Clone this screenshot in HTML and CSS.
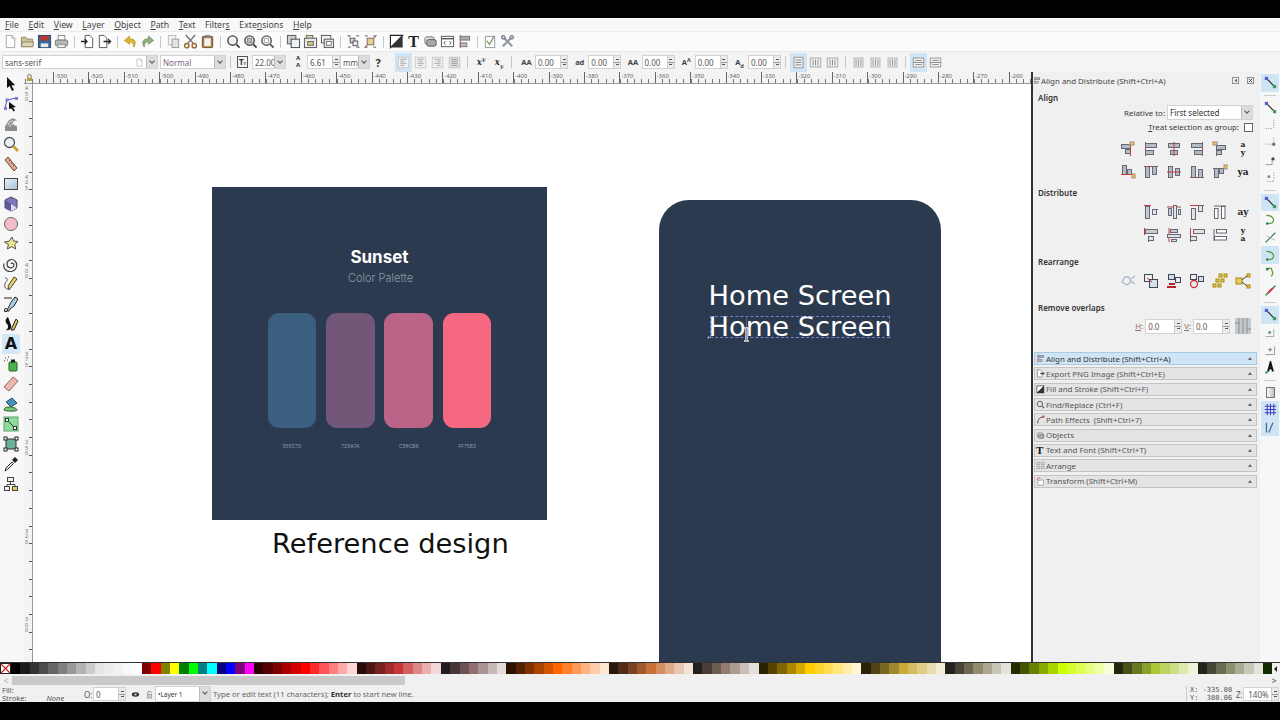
FILE: index.html
```html
<!DOCTYPE html>
<html lang="en">
<head>
  <meta charset="UTF-8">
  <title>Inkscape</title>
  <link rel="stylesheet" href="styles.css">
</head>
<body>
  <!-- shared icons -->
  <svg class="defs" width="0" height="0">
    <defs>
      <linearGradient id="pagefill" x1="0" x2="1"><stop offset="0" stop-color="#fff"/><stop offset="1" stop-color="#bbb"/></linearGradient>
      <symbol id="new" viewBox="0 0 16 16"><path d="M3.5 1.5h6l3 3v10h-9z" fill="#fff" stroke="#a5a5a5"/><path d="M9.5 1.5v3h3" fill="#e6e6e6" stroke="#a5a5a5"/></symbol>
      <symbol id="open" viewBox="0 0 16 16"><path d="M1.5 13.5v-10h5l1 2h6v8z" fill="#c9c29c" stroke="#8b8663"/><path d="M1.5 13.5l1-5h12l-1 5z" fill="#dcd6b4" stroke="#8b8663"/></symbol>
      <symbol id="save" viewBox="0 0 16 16"><rect x="1.5" y="1.5" width="13" height="13" fill="#34689f" stroke="#28466a"/><rect x="3" y="2" width="10" height="5" fill="#b23a3a"/><rect x="4" y="10" width="8" height="4" fill="#e8e8e8"/></symbol>
      <symbol id="print" viewBox="0 0 16 16"><rect x="4.5" y="1.5" width="7" height="5" fill="#fff" stroke="#888"/><rect x="1.5" y="6.5" width="13" height="6" rx="1" fill="#b9b9b9" stroke="#777"/><rect x="4" y="11" width="8" height="3.5" fill="#eee" stroke="#888"/></symbol>
      <symbol id="import" viewBox="0 0 16 16"><path d="M5.5 1.5h5l3 3v10h-8z" fill="#fff" stroke="#555"/><path d="M1 8h6M5 5.5L7.5 8 5 10.5" fill="none" stroke="#222" stroke-width="1.4"/></symbol>
      <symbol id="export" viewBox="0 0 16 16"><path d="M2.5 1.5h5l3 3v10h-8z" fill="#fff" stroke="#555"/><path d="M7 8h7M12 5.5L14.5 8 12 10.5" fill="none" stroke="#222" stroke-width="1.4"/></symbol>
      <symbol id="undo" viewBox="0 0 16 16"><path d="M7 2L1.5 7 7 11V8.5c3 0 4 1 4.5 5.5C14 10 14 5 7 5z" fill="#e0b52c" stroke="#a88518" stroke-width=".7"/></symbol>
      <symbol id="redo" viewBox="0 0 16 16"><path d="M9 2l5.5 5L9 11V8.5c-3 0-4 1-4.5 5.5C2 10 2 5 9 5z" fill="#8fb07a" stroke="#6b8a58" stroke-width=".7"/></symbol>
      <symbol id="dup" viewBox="0 0 16 16"><rect x="2.5" y="1.5" width="8" height="10" fill="#f4f4f4" stroke="#bbb"/><rect x="6.5" y="5.5" width="7" height="9" fill="#e4e4e4" stroke="#999"/></symbol>
      <symbol id="cut" viewBox="0 0 16 16"><path d="M3 1l8 9M13 1L5 10" stroke="#777" stroke-width="1.6" fill="none"/><circle cx="4" cy="12.5" r="2.3" fill="none" stroke="#9a6a2c" stroke-width="1.5"/><circle cx="12" cy="12.5" r="2.3" fill="none" stroke="#9a6a2c" stroke-width="1.5"/></symbol>
      <symbol id="paste" viewBox="0 0 16 16"><rect x="2.5" y="2.5" width="11" height="12" rx="1" fill="#a87b3e" stroke="#6f4f22"/><rect x="4.5" y="4.5" width="7" height="8.5" fill="#f3f3f3"/><rect x="5.5" y="1" width="5" height="3" fill="#888"/></symbol>
      <symbol id="zoom1" viewBox="0 0 16 16"><circle cx="7" cy="7" r="5" fill="#eef2f4" stroke="#444" stroke-width="1.5"/><path d="M11 11l3.5 3.5" stroke="#444" stroke-width="2"/></symbol>
      <symbol id="zoom2" viewBox="0 0 16 16"><circle cx="7" cy="7" r="5" fill="#eef2f4" stroke="#444" stroke-width="1.5"/><rect x="4.5" y="4.5" width="5" height="5" fill="#bbb" stroke="#666" stroke-width=".7"/><path d="M11 11l3.5 3.5" stroke="#444" stroke-width="2"/></symbol>
      <symbol id="zoom3" viewBox="0 0 16 16"><circle cx="7" cy="7" r="5" fill="#e3e9ec" stroke="#555" stroke-width="1.5"/><rect x="5" y="5" width="4" height="4" fill="#fff" stroke="#888" stroke-width=".7"/><path d="M11 11l3.5 3.5" stroke="#555" stroke-width="2"/></symbol>
      <symbol id="stack1" viewBox="0 0 16 16"><rect x="1.5" y="1.5" width="9" height="9" fill="#c7d0d6" stroke="#555"/><rect x="5.5" y="5.5" width="9" height="9" fill="#eef1f3" stroke="#444"/></symbol>
      <symbol id="stack2" viewBox="0 0 16 16"><rect x="3.5" y="1.5" width="7" height="5" fill="#ddd7a8" stroke="#666"/><rect x="1.5" y="4.5" width="13" height="10" fill="#e9e9e9" stroke="#555"/><rect x="5" y="8" width="6" height="4" fill="#d7c77c" stroke="#666"/></symbol>
      <symbol id="stack3" viewBox="0 0 16 16"><rect x="1.5" y="1.5" width="10" height="8" fill="#f3f3f3" stroke="#555"/><rect x="4.5" y="5.5" width="10" height="9" fill="#e5e5e5" stroke="#555"/><rect x="7" y="8" width="5" height="4" fill="#fff" stroke="#777"/></symbol>
      <symbol id="group" viewBox="0 0 16 16"><path d="M2 2h3M11 2h3M2 14h3M11 14h3" stroke="#555"/><rect x="4.5" y="4.5" width="5" height="5" fill="#cfd6da" stroke="#555"/><rect x="7.5" y="7.5" width="5" height="5" fill="#eee" stroke="#555"/><path d="M1.5 1.5l3 3M14.5 14.5l-3-3" stroke="#8a8aa8"/></symbol>
      <symbol id="ungroup" viewBox="0 0 16 16"><path d="M2 2h3M11 2h3M2 14h3M11 14h3" stroke="#555"/><rect x="4.5" y="4.5" width="7" height="7" fill="#e6d48a" stroke="#766"/><path d="M1.5 14.5l3-3M14.5 1.5l-3 3" stroke="#a33"/></symbol>
      <symbol id="fillstroke" viewBox="0 0 16 16"><path d="M1.5 14.5v-13h13z" fill="#fff" stroke="#222" stroke-width="1.2"/><path d="M14.5 1.5v13h-13z" fill="#333"/></symbol>
      <symbol id="objects" viewBox="0 0 16 16"><rect x="2" y="3" width="10" height="8" rx="2" fill="#ddd" stroke="#777"/><rect x="4" y="6" width="10" height="7" rx="2" fill="#aaa" stroke="#555"/></symbol>
      <symbol id="xml" viewBox="0 0 16 16"><rect x="1.5" y="2.5" width="13" height="11" fill="#fff" stroke="#555"/><path d="M2 5h12" stroke="#555" stroke-width="1.5"/><path d="M6 7.5L4 9.5l2 2M10 7.5l2 2-2 2" fill="none" stroke="#555"/></symbol>
      <symbol id="alignpanel" viewBox="0 0 16 16"><path d="M3.5 1v14" stroke="#c55" stroke-width="1.2"/><rect x="3.5" y="2.5" width="10" height="4" fill="#aaa" stroke="#777"/><rect x="3.5" y="9.5" width="7" height="4" fill="#bbb" stroke="#777"/></symbol>
      <symbol id="prefs" viewBox="0 0 16 16"><rect x="2.5" y="2.5" width="10" height="12" fill="#fff" stroke="#999"/><path d="M4 7l3 4 5-9" fill="none" stroke="#7a9a6a" stroke-width="1.4"/></symbol>
      <symbol id="tools" viewBox="0 0 16 16"><path d="M3 3l10 10M13 3L3 13" stroke="#8e9aa0" stroke-width="2.4"/><circle cx="3.5" cy="3.5" r="2" fill="#b8c2c8" stroke="#667"/><circle cx="12.5" cy="3.5" r="2" fill="#b8c2c8" stroke="#667"/></symbol>

      <symbol id="txt-l" viewBox="0 0 16 16"><rect x="1.5" y="1.5" width="13" height="13" fill="#f2f2f2" stroke="#c2c2c2"/><path d="M4 4h8M4 6.5h5M4 9h8M4 11.5h5" stroke="#999"/></symbol>
      <symbol id="txt-c" viewBox="0 0 16 16"><rect x="1.5" y="1.5" width="13" height="13" fill="#f2f2f2" stroke="#c2c2c2"/><path d="M4 4h8M5.5 6.5h5M4 9h8M5.5 11.5h5" stroke="#999"/></symbol>
      <symbol id="txt-r" viewBox="0 0 16 16"><rect x="1.5" y="1.5" width="13" height="13" fill="#f2f2f2" stroke="#c2c2c2"/><path d="M4 4h8M7 6.5h5M4 9h8M7 11.5h5" stroke="#999"/></symbol>
      <symbol id="txt-j" viewBox="0 0 16 16"><rect x="1.5" y="1.5" width="13" height="13" fill="#e4e4e4" stroke="#bbb"/><path d="M4 4h8M4 6.5h8M4 9h8M4 11.5h8" stroke="#888"/></symbol>
      <symbol id="dir-h" viewBox="0 0 16 16"><rect x="2.5" y="1.5" width="11" height="13" fill="#f3f3f3" stroke="#888"/><path d="M4.5 5h7M4.5 8h7M4.5 11h7" stroke="#666"/></symbol>
      <symbol id="dir-v" viewBox="0 0 16 16"><rect x="1.5" y="2.5" width="13" height="11" fill="#f3f3f3" stroke="#999"/><path d="M5 4.5v7M8 4.5v7M11 4.5v7" stroke="#777"/></symbol>
      <symbol id="dir-b" viewBox="0 0 16 16"><rect x="2.5" y="2.5" width="11" height="11" fill="#ececec" stroke="#aaa"/><path d="M5 4v8M8 4v8M11 4v8" stroke="#888"/></symbol>
      <symbol id="lh" viewBox="0 0 16 16"><rect x="1.5" y="2.5" width="13" height="11" fill="#f3f3f3" stroke="#888"/><path d="M1.5 8h13M4 5.5h8M4 10.5h8" stroke="#777"/></symbol>

      <symbol id="a1" viewBox="0 0 16 16"><rect x="1.5" y="3.5" width="9" height="4" fill="#b3bcc3" stroke="#667"/><rect x="5.5" y="8.5" width="5" height="4" fill="#b3bcc3" stroke="#667"/><path d="M10.5 1v14" stroke="#c33a3a"/><rect x="10" y="1" width="4" height="3" fill="#f2c94c" stroke="#a87"/></symbol>
      <symbol id="a1v" viewBox="0 0 16 16"><rect x="2.5" y="1.5" width="4" height="9" fill="#b3bcc3" stroke="#667"/><rect x="7.5" y="5.5" width="4" height="5" fill="#b3bcc3" stroke="#667"/><path d="M1 10.5h14" stroke="#c33a3a"/><rect x="12" y="10" width="3" height="4" fill="#f2c94c" stroke="#a87"/></symbol>
      <symbol id="a2" viewBox="0 0 16 16"><path d="M2.5 1v14" stroke="#c33a3a"/><rect x="2.5" y="2.5" width="11" height="4" fill="#b3bcc3" stroke="#667"/><rect x="2.5" y="9.5" width="8" height="4" fill="#b3bcc3" stroke="#667"/></symbol>
      <symbol id="a3" viewBox="0 0 16 16"><rect x="2.5" y="2.5" width="11" height="4" fill="#b3bcc3" stroke="#667"/><rect x="4.5" y="9.5" width="7" height="4" fill="#b3bcc3" stroke="#667"/><path d="M8 1v14" stroke="#c33a3a"/></symbol>
      <symbol id="a4" viewBox="0 0 16 16"><path d="M13.5 1v14" stroke="#c33a3a"/><rect x="2.5" y="2.5" width="11" height="4" fill="#b3bcc3" stroke="#667"/><rect x="5.5" y="9.5" width="8" height="4" fill="#b3bcc3" stroke="#667"/></symbol>
      <symbol id="a5" viewBox="0 0 16 16"><path d="M4.5 1v14" stroke="#c33a3a"/><rect x="1" y="1" width="4" height="3" fill="#f2c94c" stroke="#a87"/><rect x="4.5" y="4.5" width="9" height="4" fill="#b3bcc3" stroke="#667"/><rect x="4.5" y="9.5" width="5" height="4" fill="#b3bcc3" stroke="#667"/></symbol>
      <symbol id="a5v" viewBox="0 0 16 16"><path d="M1 4.5h14" stroke="#c33a3a"/><rect x="2.5" y="4.5" width="4" height="9" fill="#b3bcc3" stroke="#667"/><rect x="7.5" y="4.5" width="4" height="5" fill="#b3bcc3" stroke="#667"/><rect x="12" y="1" width="3" height="4" fill="#f2c94c" stroke="#a87"/></symbol>
      <symbol id="d1" viewBox="0 0 16 16"><path d="M1 1.5h7M9 5.5h6" stroke="#c33a3a"/><rect x="2.5" y="2.5" width="4" height="12" fill="#c3ccd2" stroke="#667"/><rect x="9.5" y="5.5" width="4" height="5" fill="#dfe4e7" stroke="#667"/></symbol>
      <symbol id="d2" viewBox="0 0 16 16"><path d="M1 3h14" stroke="#c33a3a"/><rect x="2.5" y="4.5" width="3" height="7" fill="#c3ccd2" stroke="#667"/><rect x="7.5" y="1.5" width="3" height="13" fill="#dfe4e7" stroke="#667"/><rect x="12.5" y="5.5" width="2" height="5" fill="#dfe4e7" stroke="#667"/></symbol>
      <symbol id="d3" viewBox="0 0 16 16"><path d="M1 1.5h14" stroke="#c33a3a"/><rect x="2.5" y="4.5" width="4" height="11" fill="#dfe4e7" stroke="#667"/><rect x="9.5" y="1.5" width="4" height="6" fill="#dfe4e7" stroke="#667"/></symbol>
      <symbol id="d4" viewBox="0 0 16 16"><path d="M2 2h12" stroke="#667"/><rect x="2.5" y="4.5" width="3.5" height="10" fill="#fff" stroke="#667"/><rect x="9.5" y="2.5" width="3.5" height="12" fill="#fff" stroke="#667"/></symbol>

      <symbol id="s-node" viewBox="0 0 16 16"><path d="M3 3l10 10" stroke="#222" stroke-width="1.5"/><rect x="1" y="1" width="4" height="4" fill="#5560c0"/><rect x="11" y="11" width="4" height="4" fill="#3f9a55"/></symbol>
      <symbol id="s-bbox" viewBox="0 0 16 16"><path d="M2 13h8M12 2v11" stroke="#888" stroke-dasharray="1.5 1.5"/></symbol>
      <symbol id="s-edge" viewBox="0 0 16 16"><path d="M2 10h9M12 2v12" stroke="#888" stroke-dasharray="1.5 1.5"/><circle cx="12" cy="10" r="2" fill="#5a7a60"/></symbol>
      <symbol id="s-corner" viewBox="0 0 16 16"><path d="M2 13h8V8" stroke="#888" fill="none"/><circle cx="11" cy="6" r="2" fill="#444"/></symbol>
      <symbol id="s-mid" viewBox="0 0 16 16"><path d="M12 2v11H2" stroke="#888" stroke-dasharray="1.5 1.5" fill="none"/><circle cx="6" cy="7" r="1.8" fill="#888"/></symbol>
      <symbol id="s-curve" viewBox="0 0 16 16"><path d="M3 3c8 0 10 5 8 8-1 2-4 2-6 2" stroke="#5a9a3a" stroke-width="1.5" fill="none"/><circle cx="4" cy="13" r="1.6" fill="#2f7a55"/></symbol>
      <symbol id="s-cross" viewBox="0 0 16 16"><path d="M2 14L14 2" stroke="#2e7a3c" stroke-width="1.5"/><path d="M3 6l10 5" stroke="#aab" stroke-width="1.2"/></symbol>
      <symbol id="s-cusp" viewBox="0 0 16 16"><path d="M3 3h6l2 6-2 4" stroke="#5a9a3a" stroke-width="1.5" fill="none"/><circle cx="4" cy="4" r="1.6" fill="#2f7a55"/></symbol>
      <symbol id="s-red" viewBox="0 0 16 16"><path d="M2 14L14 2" stroke="#3f9a55" stroke-width="1.8"/><path d="M5 11l6-6" stroke="#d0384a" stroke-width="2.4"/></symbol>
      <symbol id="s-pt1" viewBox="0 0 16 16"><path d="M2 13h10V4" stroke="#999" fill="none"/><circle cx="7" cy="8" r="1.8" fill="#58a868"/></symbol>
      <symbol id="s-pt2" viewBox="0 0 16 16"><path d="M2 13h11V3" stroke="#888" fill="none"/><path d="M5 7h5M7.5 4.5v5" stroke="#666"/></symbol>
      <symbol id="s-text" viewBox="0 0 16 16"><path d="M5 13L8 2l3 11M6 9h4" stroke="#111" stroke-width="2.4" fill="none"/><circle cx="3" cy="14" r="1.5" fill="#2f8a44"/></symbol>
      <symbol id="s-page" viewBox="0 0 16 16"><rect x="3" y="2" width="10" height="12" fill="url(#pagefill)" stroke="#555"/></symbol>
      <symbol id="s-grid" viewBox="0 0 16 16"><path d="M1 4h14M1 8h14M1 12h14M4 1v14M8 1v14M12 1v14" stroke="#3a3ac0" stroke-width="1.2"/></symbol>
      <symbol id="s-guide" viewBox="0 0 16 16"><path d="M3 2v12M11 2L6 14" stroke="#4a6a9a" stroke-width="1.6"/></symbol>
    </defs>
  </svg>

  <div class="letterbox"></div>

  <nav class="menu">
    <span><u>F</u>ile</span>
    <span><u>E</u>dit</span>
    <span><u>V</u>iew</span>
    <span><u>L</u>ayer</span>
    <span><u>O</u>bject</span>
    <span><u>P</u>ath</span>
    <span><u>T</u>ext</span>
    <span>Filter<u>s</u></span>
    <span>Exte<u>n</u>sions</span>
    <span><u>H</u>elp</span>
  </nav>

  <div class="commands">
    <svg class="btn"><use href="#new"/></svg>
    <svg class="btn"><use href="#open"/></svg>
    <svg class="btn"><use href="#save"/></svg>
    <svg class="btn"><use href="#print"/></svg>
    <i class="sep"></i>
    <svg class="btn"><use href="#import"/></svg>
    <svg class="btn"><use href="#export"/></svg>
    <i class="sep"></i>
    <svg class="btn"><use href="#undo"/></svg>
    <svg class="btn"><use href="#redo"/></svg>
    <i class="sep"></i>
    <svg class="btn"><use href="#dup"/></svg>
    <svg class="btn"><use href="#cut"/></svg>
    <svg class="btn"><use href="#paste"/></svg>
    <i class="sep"></i>
    <svg class="btn"><use href="#zoom1"/></svg>
    <svg class="btn"><use href="#zoom2"/></svg>
    <svg class="btn"><use href="#zoom3"/></svg>
    <i class="sep"></i>
    <svg class="btn"><use href="#stack1"/></svg>
    <svg class="btn"><use href="#stack2"/></svg>
    <svg class="btn"><use href="#stack3"/></svg>
    <i class="sep"></i>
    <svg class="btn"><use href="#group"/></svg>
    <svg class="btn"><use href="#ungroup"/></svg>
    <i class="sep"></i>
    <svg class="btn"><use href="#fillstroke"/></svg>
    <span class="btn big-t">T</span>
    <svg class="btn"><use href="#objects"/></svg>
    <svg class="btn"><use href="#xml"/></svg>
    <svg class="btn"><use href="#alignpanel"/></svg>
    <i class="sep"></i>
    <svg class="btn"><use href="#prefs"/></svg>
    <svg class="btn"><use href="#tools"/></svg>
  </div>

  <div class="textbar">
    <div class="combo font-combo"><span class="combo-text">sans-serif</span><svg class="combo-ic"><use href="#new"/></svg><b class="arrow"></b></div>
    <div class="combo style-combo"><span class="combo-text">Normal</span><b class="arrow"></b></div>
    <i class="sep"></i>
    <span class="tb-ic tsize">T<small>T</small></span>
    <div class="combo size-combo"><span class="combo-text">22.00</span><b class="arrow"></b></div>
    <span class="tb-ic spread">A<br>A</span>
    <div class="spin lh-spin"><span>6.61</span><b class="spinner"></b></div>
    <div class="combo unit-combo"><span class="combo-text">mm</span><b class="arrow"></b></div>
    <span class="help">?</span>
    <span class="toggle on first"><svg class="ico"><use href="#txt-l"/></svg></span>
    <span class="toggle"><svg class="ico"><use href="#txt-c"/></svg></span>
    <span class="toggle"><svg class="ico"><use href="#txt-r"/></svg></span>
    <span class="toggle"><svg class="ico"><use href="#txt-j"/></svg></span>
    <i class="sep"></i>
    <span class="sup">x<sup>y</sup></span>
    <span class="sup">x<sub>y</sub></span>
    <i class="sep sep-c"></i>
    <span class="fx">AA</span>
    <div class="spin num"><span>0.00</span><b class="spinner"></b></div>
    <span class="fx">ad</span>
    <div class="spin num"><span>0.00</span><b class="spinner"></b></div>
    <span class="fx">AA</span>
    <div class="spin num"><span>0.00</span><b class="spinner"></b></div>
    <span class="fx">A<sup>A</sup></span>
    <div class="spin num"><span>0.00</span><b class="spinner"></b></div>
    <span class="fx">A<sub>d</sub></span>
    <div class="spin num"><span>0.00</span><b class="spinner"></b></div>
    <i class="sep"></i>
    <span class="toggle on"><svg class="ico"><use href="#dir-h"/></svg></span>
    <span class="toggle"><svg class="ico"><use href="#dir-v"/></svg></span>
    <span class="toggle"><svg class="ico"><use href="#dir-v"/></svg></span>
    <i class="sep"></i>
    <span class="toggle"><svg class="ico"><use href="#dir-b"/></svg></span>
    <span class="toggle"><svg class="ico"><use href="#dir-b"/></svg></span>
    <span class="toggle"><svg class="ico"><use href="#dir-b"/></svg></span>
    <i class="sep"></i>
    <span class="toggle on"><svg class="ico"><use href="#lh"/></svg></span>
    <span class="toggle"><svg class="ico"><use href="#lh"/></svg></span>
  </div>

  <div class="workspace">
    <aside class="toolbox">
      <svg class="tool" viewBox="0 0 16 16"><path d="M4 1l8 8-3.500.5L11 14l-2 1-2.300-5L4 12z" fill="#111"/></svg>
      <svg class="tool" viewBox="0 0 16 16"><path d="M2 12L4 4l9-2" fill="none" stroke="#5058c0"/><rect x="1" y="11" width="3" height="3" fill="#7a80d8"/><rect x="2.5" y="2.5" width="3" height="3" fill="#7a80d8"/><rect x="12" y="1" width="3" height="3" fill="#7a80d8"/><path d="M6 6l7 5-3 .5 2 3-1.5 1-2-3L6 13z" fill="#111"/></svg>
      <svg class="tool" viewBox="0 0 16 16"><path d="M2 15V10c2-1 2-5 6-7 3-1 5 0 6 2-2-1-4 0-4 2s2 3 4 3v5z" fill="#8d8d8d"/><path d="M5 9c1-3 3-4 5-4M7 11c0-2 1-3 3-3" stroke="#eee" fill="none"/></svg>
      <svg class="tool" viewBox="0 0 16 16"><circle cx="6.5" cy="6.5" r="5" fill="#eaf2f7" stroke="#555" stroke-width="1.3"/><path d="M10.5 10.5l4.5 4.5" stroke="#c9a030" stroke-width="2.6"/></svg>
      <svg class="tool" viewBox="0 0 16 16"><path d="M5 1l9 11-3 3L2 4z" fill="#dba98e" stroke="#6d4a3a"/><path d="M6 5l1.5-1M8 7.5l1.5-1M10 10l1.5-1" stroke="#6d4a3a"/></svg>
      <svg class="tool" viewBox="0 0 16 16"><defs><linearGradient id="rectg" x1="0" y1="0" x2="1" y2="1"><stop offset="0" stop-color="#e8f0f6"/><stop offset="1" stop-color="#a9c2d6"/></linearGradient></defs><rect x="1.5" y="2.5" width="13" height="11" fill="url(#rectg)" stroke="#444"/></svg>
      <svg class="tool" viewBox="0 0 16 16"><path d="M8 1l6 3v8l-6 3-6-3V4z" fill="#7a78b5" stroke="#47456f"/><path d="M8 8l6 4-6 3-6-3z" fill="#e0dff2"/><path d="M2 4l6 4v7l-6-3z" fill="#5c5a96"/></svg>
      <svg class="tool" viewBox="0 0 16 16"><circle cx="8" cy="8" r="6.5" fill="#f6bcc8" stroke="#666"/></svg>
      <svg class="tool" viewBox="0 0 16 16"><path d="M9 1l1.5 4 4.500.5-3.300 3 1 4.500-4-2.300-4.300 2.300 1-4.500L1.500 6l4.500-.7z" fill="#ece58c" stroke="#555"/></svg>
      <svg class="tool" viewBox="0 0 16 16"><path d="M8 8c1-2 4 0 2.500 2.500S4 12 4 8s5-6 8-3 2 10-4 10.500-8-4-7-8" fill="none" stroke="#444" stroke-width="1.2"/></svg>
      <svg class="tool" viewBox="0 0 16 16"><path d="M6 14L14 3l-3-2-6 9z" fill="#e8cf58" stroke="#443"/><path d="M2 2c3 0 3 2 1 4s-2 7 2 7" fill="none" stroke="#555"/></svg>
      <svg class="tool" viewBox="0 0 16 16"><path d="M1 2h8M1 15c5 0 5-7 8-10l3-4 3 2-4 7c-2 2-4 2-5 5z" fill="#a8cde0" stroke="#222"/><circle cx="3" cy="14" r="1.5" fill="#fff" stroke="#222"/></svg>
      <svg class="tool" viewBox="0 0 16 16"><path d="M8 14L13 3l2 2-4 9z" fill="#e3c95a" stroke="#222"/><path d="M5 1C2 3 2 6 4 8s1 5-1 6c4 1 6-2 5-5S6 4 5 1z" fill="#111"/></svg>
      <div class="tool-active"><span>A</span></div>
      <svg class="tool" viewBox="0 0 16 16"><rect x="6" y="6" width="8" height="9" rx="1" fill="#4cb04c" stroke="#1e6a1e"/><rect x="8" y="3.5" width="4" height="3" fill="#222"/><path d="M2 2h1M4 4h1M1 5h1M5 1h1" stroke="#333"/></svg>
      <svg class="tool" viewBox="0 0 16 16"><path d="M10 1l5 4-9 10-5-4z" fill="#f0b7ad" stroke="#8c6a62"/></svg>
      <svg class="tool" viewBox="0 0 16 16"><path d="M3 6l6-4 5 5-6 4z" fill="#4a92ba" stroke="#22506e"/><path d="M1 14c0-2 2-3 5-3s8 1 8 3-13 1-13 0z" fill="#7ec27e" stroke="#2e6a2e"/></svg>
      <svg class="tool" viewBox="0 0 16 16"><rect x="1" y="1" width="14" height="14" fill="#8fdc9a" stroke="#5aa86a"/><path d="M4 4l8 8" stroke="#333"/><rect x="2.5" y="2.5" width="3" height="3" fill="#fff" stroke="#333"/><rect x="10.5" y="10.5" width="3" height="3" fill="#fff" stroke="#333"/></svg>
      <svg class="tool" viewBox="0 0 16 16"><rect x="3" y="3" width="10" height="10" fill="#6ab39a" stroke="#333"/><rect x="1" y="1" width="3" height="3" fill="#fff" stroke="#222"/><rect x="12" y="1" width="3" height="3" fill="#fff" stroke="#222"/><rect x="1" y="12" width="3" height="3" fill="#fff" stroke="#222"/><rect x="12" y="12" width="3" height="3" fill="#fff" stroke="#222"/></svg>
      <svg class="tool" viewBox="0 0 16 16"><path d="M2 15l1-3 6-6 1.5 1.5-6 6z" fill="#ddd" stroke="#333"/><path d="M9 4l3-3 3 3-3 3z" fill="#222"/></svg>
      <svg class="tool" viewBox="0 0 16 16"><rect x="4.5" y="1.5" width="6" height="4" fill="#eee" stroke="#444"/><rect x="1.5" y="10.5" width="5" height="4" fill="#eee" stroke="#444"/><rect x="9.5" y="10.5" width="5" height="4" fill="#e6c95a" stroke="#444"/><path d="M7.5 5.5v3M4 10.5v-2h8v2" fill="none" stroke="#444"/></svg>
    </aside>

    <div class="drawing">
      <div class="ruler-top" id="rulerTop"><svg class="ruler-lock" viewBox="0 0 8 8"><path d="M2 4V2.5a2 2 0 014 0V4" fill="none" stroke="#665"/><rect x="1" y="4" width="6" height="4" fill="#b8a04a"/></svg></div>
      <div class="drawing-body">
        <div class="ruler-left" id="rulerLeft"></div>
        <div class="canvas">
          <div class="card">
            <div class="card-title">Sunset</div>
            <div class="card-sub">Color Palette</div>
            <div class="swatches">
              <div class="swatch-col"><div class="swatch sw-blue"></div><span>355C7D</span></div>
              <div class="swatch-col"><div class="swatch sw-purple"></div><span>725A7A</span></div>
              <div class="swatch-col"><div class="swatch sw-rose"></div><span>C56C86</span></div>
              <div class="swatch-col"><div class="swatch sw-coral"></div><span>FF7582</span></div>
            </div>
          </div>
          <div class="caption">Reference design</div>
          <div class="phone">
            <div class="phone-line">Home Screen</div>
            <div class="phone-line editing">
              Home Screen
              <i class="text-box"></i>
              <i class="text-handle"></i>
              <i class="text-caret"></i>
              <svg class="ibeam" viewBox="0 0 7 16"><path d="M1 1h5M3.5 1v14M1 15h5" stroke="#fff" stroke-width="2.4"/><path d="M1 1h5M3.5 1v14M1 15h5" stroke="#667" stroke-width=".8"/></svg>
            </div>
          </div>
        </div>
      </div>
    </div>

    <aside class="dock">
      <div class="dock-title">
        <svg class="title-ic"><use href="#alignpanel"/></svg>
        <span>Align and Distribute (Shift+Ctrl+A)</span>
        <svg class="win-btn win-first" viewBox="0 0 8 8"><rect x=".5" y=".5" width="7" height="7" fill="#eee" stroke="#888"/><path d="M5.5 2L3 4l2.5 2z" fill="#555"/></svg>
        <svg class="win-btn" viewBox="0 0 8 8"><rect x=".5" y=".5" width="7" height="7" fill="#eee" stroke="#888"/><path d="M2 2l4 4M6 2L2 6" stroke="#444"/></svg>
      </div>

      <div class="panel">
        <h4 class="sec-align">Align</h4>
        <div class="rel-row"><span>Relative to:</span><div class="combo rel-combo"><span class="combo-text">First selected</span><b class="arrow"></b></div></div>
        <div class="treat-row"><span><u>T</u>reat selection as group:</span><i class="check"></i></div>
        <div class="ic-grid six">
          <svg class="ali"><use href="#a1"/></svg>
          <svg class="ali"><use href="#a2"/></svg>
          <svg class="ali"><use href="#a3"/></svg>
          <svg class="ali"><use href="#a4"/></svg>
          <svg class="ali"><use href="#a5"/></svg>
          <span class="ali-letters stack">a<br>y</span>
          <svg class="ali"><use href="#a1v"/></svg>
          <svg class="ali rot"><use href="#a2"/></svg>
          <svg class="ali rot"><use href="#a3"/></svg>
          <svg class="ali rot"><use href="#a4"/></svg>
          <svg class="ali"><use href="#a5v"/></svg>
          <span class="ali-letters">ya</span>
        </div>

        <h4 class="sec-dist">Distribute</h4>
        <div class="ic-grid five">
          <svg class="ali"><use href="#d1"/></svg>
          <svg class="ali"><use href="#d2"/></svg>
          <svg class="ali"><use href="#d3"/></svg>
          <svg class="ali"><use href="#d4"/></svg>
          <span class="ali-letters">ay</span>
          <svg class="ali rot"><use href="#d1"/></svg>
          <svg class="ali rot"><use href="#d2"/></svg>
          <svg class="ali rot"><use href="#d3"/></svg>
          <svg class="ali rot"><use href="#d4"/></svg>
          <span class="ali-letters stack">y<br>a</span>
        </div>

        <h4 class="sec-rear">Rearrange</h4>
        <div class="ic-row">
          <svg class="ali" viewBox="0 0 16 16"><path d="M2 9l3-5h4l2 5-4 3zM11 6l4-3M11 8l4 3" fill="none" stroke="#aab8c8" stroke-width="1.3"/></svg>
          <svg class="ali" viewBox="0 0 16 16"><rect x="1.5" y="1.5" width="8" height="7" fill="#eee" stroke="#445"/><rect x="6.5" y="6.5" width="8" height="8" fill="#d4e0e8" stroke="#445"/><path d="M4 5l5 4" stroke="#a33"/></svg>
          <svg class="ali" viewBox="0 0 16 16"><rect x="2.5" y="1.5" width="6" height="5" fill="#cde" stroke="#445"/><rect x="9.5" y="4.5" width="5" height="5" fill="#eee" stroke="#445"/><path d="M1 14h9M3 11h6" stroke="#b22" stroke-width="2"/></svg>
          <svg class="ali" viewBox="0 0 16 16"><rect x="1.5" y="1.5" width="6" height="5" fill="#eee" stroke="#445"/><rect x="9.5" y="3.5" width="5" height="5" fill="#cde" stroke="#445"/><circle cx="5" cy="11" r="3.5" fill="none" stroke="#c33" stroke-width="1.3"/></svg>
          <svg class="ali" viewBox="0 0 16 16"><rect x="7" y="1" width="3" height="3" fill="#e8cc5c" stroke="#a80"/><rect x="12" y="1" width="3" height="3" fill="#e8cc5c" stroke="#a80"/><rect x="4" y="6" width="3" height="3" fill="#e8cc5c" stroke="#a80"/><rect x="9" y="6" width="3" height="3" fill="#e8cc5c" stroke="#a80"/><rect x="1" y="11" width="3" height="3" fill="#e8cc5c" stroke="#a80"/><rect x="6" y="11" width="3" height="3" fill="#e8cc5c" stroke="#a80"/></svg>
          <svg class="ali" viewBox="0 0 16 16"><rect x="1" y="5" width="6" height="6" fill="#e8cc5c" stroke="#a80"/><rect x="12" y="1" width="3" height="3" fill="#e8cc5c" stroke="#a80"/><rect x="12" y="12" width="3" height="3" fill="#e8cc5c" stroke="#a80"/><path d="M7 7l5-4M7 9l5 4" stroke="#444"/></svg>
        </div>

        <h4 class="sec-over">Remove overlaps</h4>
        <div class="overlap-row">
          <span class="ov-h"><u>H</u>:</span>
          <div class="spin ov-spin"><span>0.0</span><b class="spinner"></b></div>
          <span class="ov-v"><u>V</u>:</span>
          <div class="spin ov-spin"><span>0.0</span><b class="spinner"></b></div>
          <svg class="ali ov-ic" viewBox="0 0 16 16"><rect width="16" height="16" fill="#c4c9cd"/><path d="M4 0v16M8 0v16M12 0v16M0 5h5M11 11h5" stroke="#9aa2a8" stroke-width="1.4"/></svg>
        </div>
      </div>

      <div class="tabs">
        <div class="tab active"><svg class="tab-ic"><use href="#alignpanel"/></svg><span>Align and Distribute (Shift+Ctrl+A)</span><b></b></div>
        <div class="tab"><svg class="tab-ic"><use href="#export"/></svg><span>Export PNG Image (Shift+Ctrl+E)</span><b></b></div>
        <div class="tab"><svg class="tab-ic"><use href="#fillstroke"/></svg><span>Fill and Stroke (Shift+Ctrl+F)</span><b></b></div>
        <div class="tab"><svg class="tab-ic"><use href="#zoom3"/></svg><span>Find/Replace (Ctrl+F)</span><b></b></div>
        <div class="tab"><svg class="tab-ic" viewBox="0 0 16 16"><path d="M3 15C3 8 6 4 14 3" fill="none" stroke="#444" stroke-width="1.6"/><rect x="11" y="1" width="4" height="4" fill="#a66"/></svg><span>Path Effects  (Shift+Ctrl+7)</span><b></b></div>
        <div class="tab"><svg class="tab-ic"><use href="#objects"/></svg><span>Objects</span><b></b></div>
        <div class="tab"><span class="tab-t">T</span><span>Text and Font (Shift+Ctrl+T)</span><b></b></div>
        <div class="tab"><svg class="tab-ic" viewBox="0 0 16 16"><path d="M1.5 2.5h5v4h-5zM9.5 2.5h5v4h-5zM1.5 9.5h5v4h-5zM9.5 9.5h5v4h-5z" fill="#eee" stroke="#777"/></svg><span>Arrange</span><b></b></div>
        <div class="tab"><svg class="tab-ic" viewBox="0 0 16 16"><rect x="3.5" y="5.5" width="10" height="9" fill="#fff" stroke="#777"/><path d="M2 5c0-3 3-4 6-3" fill="none" stroke="#b33" stroke-width="1.3"/></svg><span>Transform (Shift+Ctrl+M)</span><b></b></div>
      </div>
    </aside>

    <aside class="snapbar">
      <span class="snap on"><svg><use href="#s-node"/></svg></span>
      <i class="snap-sep"></i>
      <span class="snap"><svg><use href="#s-node"/></svg></span>
      <span class="snap"><svg><use href="#s-bbox"/></svg></span>
      <span class="snap"><svg><use href="#s-edge"/></svg></span>
      <span class="snap"><svg><use href="#s-corner"/></svg></span>
      <span class="snap"><svg><use href="#s-mid"/></svg></span>
      <i class="snap-sep"></i>
      <span class="snap on"><svg><use href="#s-node"/></svg></span>
      <span class="snap"><svg><use href="#s-curve"/></svg></span>
      <span class="snap"><svg><use href="#s-cross"/></svg></span>
      <span class="snap on"><svg><use href="#s-curve"/></svg></span>
      <span class="snap"><svg><use href="#s-cusp"/></svg></span>
      <span class="snap"><svg><use href="#s-red"/></svg></span>
      <i class="snap-sep"></i>
      <span class="snap on"><svg><use href="#s-node"/></svg></span>
      <span class="snap"><svg><use href="#s-pt1"/></svg></span>
      <span class="snap"><svg><use href="#s-pt2"/></svg></span>
      <span class="snap"><svg><use href="#s-text"/></svg></span>
      <i class="snap-sep"></i>
      <span class="snap"><svg><use href="#s-page"/></svg></span>
      <span class="snap on"><svg><use href="#s-grid"/></svg></span>
      <span class="snap on"><svg><use href="#s-guide"/></svg></span>
    </aside>
  </div>

  <div class="palette">
    <svg class="no-paint" viewBox="0 0 11 11"><rect x=".5" y=".5" width="10" height="10" fill="#fff" stroke="#222"/><path d="M1 1l9 9M10 1l-9 9" stroke="#c22" stroke-width="1.2"/></svg>
    <div class="colors" id="colors"></div>
    <b class="palette-arrow"></b>
  </div>

  <div class="hscroll">
    <span class="scroll-arrow">&lt;</span>
    <div class="scroll-track"><div class="scroll-thumb"></div></div>
    <span class="scroll-arrow dark">&gt;</span>
  </div>

  <footer class="status">
    <div class="fillstroke"><span>Fill:</span><span>Stroke:<em>None</em></span></div>
    <span class="op-label">O:</span>
    <div class="spin op-spin"><span>0</span><b class="spinner"></b></div>
    <svg class="st-ic" viewBox="0 0 10 10"><ellipse cx="5" cy="5" rx="4" ry="2.5" fill="#333"/><circle cx="5" cy="5" r="1.2" fill="#ddd"/></svg>
    <svg class="st-ic" viewBox="0 0 10 10"><path d="M3 5V3.5a2 2 0 014 0" fill="none" stroke="#888"/><rect x="2.5" y="5" width="5" height="4" fill="#ccc" stroke="#888" stroke-width=".6"/></svg>
    <div class="combo layer-combo"><span class="combo-text">•Layer 1</span><b class="arrow"></b></div>
    <div class="message">Type or edit text (11 characters); <b>Enter</b> to start new line.</div>
    <div class="coords"><span>X: -335.08</span><span>Y:  380.06</span></div>
    <span class="z-label">Z:</span>
    <div class="spin z-spin"><span>140%</span><b class="spinner"></b></div>
  </footer>

  <div class="letterbox"></div>

  <script src="app.js"></script>
</body>
</html>
```

FILE: styles.css
```css
/* Global Styles */
* {
  box-sizing: border-box;
}

body {
  margin: 0;
  width: 1280px;
  height: 720px;
  overflow: hidden;
  display: flex;
  flex-direction: column;
  background: #000;
  color: #3a3a3a;
  font-family: 'Noto Sans', sans-serif;
  font-size: 8px;
}

.defs {
  position: absolute;
}

.letterbox {
  height: 18px;
  flex: none;
  background: #000;
}

/* Menu */
.menu {
  height: 13px;
  flex: none;
  display: flex;
  align-items: center;
  gap: 9.6px;
  padding-left: 5px;
  background: #f8f8f8;
  font-size: 8.7px;
  color: #444;
}

/* Command bar */
.commands {
  height: 20px;
  flex: none;
  display: flex;
  align-items: center;
  padding-left: 2px;
  background: #fbfbfb;
  border-top: 1px solid #ececec;
}

.btn {
  width: 17px;
  height: 15px;
  flex: none;
}

.big-t {
  font-family: 'Liberation Serif', serif;
  font-weight: bold;
  font-size: 16px;
  line-height: 15px;
  text-align: center;
  color: #222;
}

.sep {
  width: 9px;
  height: 12px;
  flex: none;
  background: linear-gradient(#c6c6c6, #c6c6c6) center / 1px 100% no-repeat;
}

/* Text bar */
.textbar {
  height: 21px;
  flex: none;
  display: flex;
  align-items: center;
  padding-left: 2px;
  background: #f4f4f4;
  border-top: 1px solid #e8e8e8;
}

.combo,
.spin {
  height: 14px;
  flex: none;
  display: flex;
  align-items: center;
  background: #fff;
  border: 1px solid #d2d2d2;
  font-size: 8px;
  color: #555;
}

.combo-text {
  flex: 1;
  padding-left: 2px;
  white-space: nowrap;
  overflow: hidden;
}

.combo-ic {
  width: 9px;
  height: 9px;
  margin-right: 2px;
}

.arrow {
  width: 11px;
  height: 100%;
  flex: none;
  background: #dcdcdc;
  border-left: 1px solid #bbb;
  position: relative;
}

.arrow::after {
  content: "";
  position: absolute;
  left: 3px;
  top: 3px;
  width: 3px;
  height: 3px;
  border-right: 1px solid #555;
  border-bottom: 1px solid #555;
  transform: rotate(45deg);
}

.spin span {
  flex: 1;
  padding-left: 2px;
}

.spinner {
  width: 7px;
  height: 100%;
  flex: none;
  background:
    linear-gradient(#999, #999) center / 100% 1px no-repeat,
    linear-gradient(#555, #555) center 3px / 3px 1px no-repeat,
    linear-gradient(#555, #555) center 8px / 3px 1px no-repeat,
    #eaeaea;
  border-left: 1px solid #ccc;
}

.font-combo { width: 156px; }
.style-combo { width: 66px; margin-left: 2px; color: #7a5f80; }
.tsize { width: 11px; margin-left: 2px; border: 1px solid #555; height: 12px; font-size: 8px; line-height: 10px; text-align: center; font-weight: bold; color: #333; white-space: nowrap; }
.tsize small { font-size: 4px; }
.size-combo { width: 34px; margin-left: 4px; }
.spread { width: 12px; margin-left: 6px; font-size: 6px; line-height: 7px; font-weight: bold; text-align: center; color: #333; }
.lh-spin { width: 33px; margin-left: 3px; }
.unit-combo { width: 30px; }
.help { width: 12px; margin-left: 2px; font-size: 11px; font-weight: bold; text-align: center; color: #333; }

.toggle {
  width: 17px;
  height: 19px;
  flex: none;
  display: flex;
  align-items: center;
  justify-content: center;
}

.toggle.on {
  background: #cfe5f6;
}

.first {
  margin-left: 11px;
}

.ico {
  width: 13px;
  height: 13px;
}

.sep-c { width: 6.75px; }

.sup {
  width: 18px;
  flex: none;
  font-family: 'DejaVu Serif', serif;
  font-style: italic;
  font-weight: bold;
  font-size: 8.5px;
  text-align: center;
  color: #333;
}

.sup sup,
.sup sub,
.fx sup,
.fx sub {
  font-size: 5.5px;
  line-height: 0;
}

.fx {
  width: 15px;
  margin-left: 4.25px;
  margin-right: 1px;
  flex: none;
  font-size: 7.5px;
  font-weight: bold;
  text-align: center;
  color: #444;
  white-space: nowrap;
}

.num {
  width: 33px;
}

/* Workspace */
.workspace {
  height: 590px;
  flex: none;
  display: flex;
}

.toolbox {
  width: 24px;
  flex: none;
  display: flex;
  flex-direction: column;
  align-items: center;
  padding-top: 2px;
  padding-right: 2px;
  background: #f7f7f7;
}

.tool {
  width: 16px;
  height: 20px;
  flex: none;
  padding: 2px 0;
}

.tool-active {
  width: 18px;
  height: 20px;
  flex: none;
  background: #d2e7f7;
  text-align: center;
}

.tool-active span {
  font-family: 'DejaVu Sans', sans-serif;
  font-weight: bold;
  font-size: 16px;
  line-height: 20px;
  color: #111;
}

.drawing {
  width: 1007px;
  flex: none;
  display: flex;
  flex-direction: column;
}

.ruler-top {
  height: 12px;
  flex: none;
  display: flex;
  padding-left: 29px;
  position: relative;
  border-bottom: 1px solid #999;
  background:
    repeating-linear-gradient(90deg, #666 0 1px, transparent 1px 35.4px) 29px 0 / 100% 100% no-repeat,
    repeating-linear-gradient(90deg, #777 0 1px, transparent 1px 7.08px) 1px bottom / 100% 4px no-repeat,
    #f3f3f3;
}

.ruler-top span {
  width: 35.4px;
  flex: none;
  padding-left: 2px;
  font-size: 6px;
  line-height: 9px;
  color: #666;
}

.ruler-lock {
  position: absolute;
  left: 2px;
  top: 2px;
  width: 7px;
  height: 7px;
}

.drawing-body {
  flex: 1;
  display: flex;
  min-height: 0;
}

.ruler-left {
  width: 9px;
  flex: none;
  display: flex;
  flex-direction: column;
  border-right: 1px solid #999;
  overflow: hidden;
  background:
    repeating-linear-gradient(180deg, #555 0 1px, transparent 1px 17.7px) right -1px / 3px 100% no-repeat,
    #f3f3f3;
}

.ruler-left span {
  height: 88.5px;
  flex: none;
  width: 4px;
  margin-left: 1px;
  padding-top: 2px;
  font-size: 5.5px;
  line-height: 5.5px;
  word-break: break-all;
  color: #776;
}

/* Canvas */
.canvas {
  flex: 1;
  position: relative;
  overflow: hidden;
  background: #fff;
  font-family: 'DejaVu Sans', sans-serif;
}

.card {
  position: absolute;
  left: 179px;
  top: 103px;
  width: 335px;
  height: 333px;
  padding-top: 60px;
  display: flex;
  flex-direction: column;
  align-items: center;
  background: #2b3a4e;
}

.card-title {
  font-family: Inter, sans-serif;
  font-weight: 700;
  font-size: 17px;
  line-height: 20px;
  color: #fff;
}

.card-sub {
  margin-top: 4px;
  margin-left: 2px;
  font-family: Inter, sans-serif;
  font-weight: 300;
  font-size: 11px;
  line-height: 14px;
  color: #8d99a8;
}

.swatches {
  margin-top: 28px;
  display: flex;
  gap: 9.6px;
}

.swatch-col {
  width: 48.8px;
  display: flex;
  flex-direction: column;
  align-items: center;
  gap: 15px;
}

.swatch-col span {
  font-family: Inter, sans-serif;
  font-size: 5px;
  line-height: 7px;
  color: #8d99a8;
}

.swatch {
  width: 100%;
  height: 115px;
  border-radius: 11px;
}

.sw-blue { background: #3a5f7f; }
.sw-purple { background: #725779; }
.sw-rose { background: #bc6487; }
.sw-coral { background: #f66781; }

.caption {
  position: absolute;
  left: 239px;
  top: 442px;
  font-size: 27.3px;
  line-height: 36px;
  color: #111;
  white-space: nowrap;
}

.phone {
  position: absolute;
  left: 626px;
  top: 116px;
  width: 282px;
  height: 480px;
  padding-top: 80px;
  border-radius: 30px 30px 0 0;
  background: #2b3a4e;
  color: #fff;
  text-align: center;
  font-size: 27.3px;
  line-height: 31px;
}

.phone-line {
  white-space: nowrap;
}

.editing {
  position: relative;
}

.text-box {
  position: absolute;
  left: 51px;
  right: 51px;
  top: 5px;
  height: 22px;
  border: 1px dashed #7a80d0;
}

.text-handle {
  position: absolute;
  left: 48px;
  top: 25px;
  width: 3px;
  height: 3px;
  background: #fff;
  border: 1px solid #556;
}

.text-caret {
  position: absolute;
  left: 87px;
  top: 5px;
  width: 1px;
  height: 22px;
  background: #5a6270;
}

.ibeam {
  position: absolute;
  left: 84px;
  top: 16px;
  width: 7px;
  height: 15px;
}

/* Dock */
.dock {
  width: 229px;
  flex: none;
  display: flex;
  flex-direction: column;
  background: #f0f0f0;
  border-left: 2px solid #333;
}

.dock-title {
  height: 17px;
  flex: none;
  display: flex;
  align-items: center;
  padding-left: 0;
  padding-right: 6px;
  font-size: 7.9px;
  color: #444;
}

.title-ic {
  width: 8px;
  height: 9px;
  flex: none;
}

.win-btn {
  width: 7px;
  height: 7px;
  flex: none;
}

.win-first {
  margin-left: auto;
  margin-right: 8px;
}

.panel {
  flex: 1;
  display: flex;
  flex-direction: column;
  align-items: flex-end;
  padding: 0 5px;
  font-size: 7.9px;
}

.panel h4 {
  align-self: flex-start;
  margin: 0;
  font-size: 8px;
  line-height: 11px;
  font-weight: 600;
  color: #333;
}

.panel .sec-align { margin-top: 3px; }
.panel .sec-dist { margin-top: 7px; }
.panel .sec-rear { margin-top: 13px; }
.panel .sec-over { margin-top: 13px; }

.rel-row {
  margin-top: 2px;
  display: flex;
  align-items: center;
  gap: 2px;
  padding-right: 2px;
}

.rel-combo {
  width: 86px;
  height: 15px;
  color: #333;
}

.treat-row {
  display: flex;
  align-items: center;
  height: 14px;
  gap: 5px;
  padding-right: 2px;
}

.check {
  width: 9px;
  height: 9px;
  background: #fff;
  border: 1px solid #666;
}

.ic-grid {
  display: grid;
  grid-auto-rows: 16px;
  gap: 7px;
  padding-right: 4px;
}

.six {
  margin-top: 7px;
  grid-template-columns: repeat(6, 16px);
}

.five {
  margin-top: 6px;
  grid-template-columns: repeat(5, 16px);
}

.ic-row {
  margin-top: 6px;
  display: flex;
  gap: 7px;
  padding-right: 4px;
}

.ali {
  width: 16px;
  height: 16px;
  display: block;
}

.rot {
  transform: rotate(90deg) scaleY(-1);
}

.ali-letters {
  width: 16px;
  height: 16px;
  font-family: 'DejaVu Serif', serif;
  font-weight: bold;
  font-size: 9px;
  line-height: 16px;
  text-align: center;
  color: #222;
}

.stack {
  font-size: 7.5px;
  line-height: 8px;
}

.overlap-row {
  margin-top: 5px;
  display: flex;
  align-items: center;
  padding-right: 4px;
}

.ov-spin {
  width: 37px;
  height: 15px;
}

.ov-h { margin-right: 2px; color: #8a6a5a; }
.ov-v { margin: 0 2px; color: #8a6a5a; }
.ov-ic { margin-left: 5px; }

.tabs {
  flex: none;
  display: flex;
  flex-direction: column;
  gap: 2.3px;
  padding: 0 3px 174.5px 1px;
  font-size: 7.9px;
}

.tab {
  height: 13px;
  display: flex;
  align-items: center;
  padding-left: 1px;
  padding-right: 4px;
  background: #e4e4e4;
  border: 1px solid #c4c4c4;
  white-space: pre;
  color: #555;
}

.tab.active {
  background: #cfe5f6;
  border-color: #a8cbe4;
  color: #333;
}

.tab b {
  margin-left: auto;
  width: 0;
  height: 0;
  border-left: 2.5px solid transparent;
  border-right: 2.5px solid transparent;
  border-bottom: 3px solid #666;
}

.tab-ic {
  width: 9px;
  height: 9px;
  margin-right: 1px;
  flex: none;
}

.tab-t {
  width: 9px;
  margin-right: 1px;
  font-family: 'Liberation Serif', serif;
  font-weight: bold;
  font-size: 11px;
  color: #111;
}

/* Snap bar */
.snapbar {
  width: 20px;
  flex: none;
  display: flex;
  flex-direction: column;
  align-items: center;
  padding-top: 2px;
  background: #f7f7f7;
}

.snap {
  width: 18px;
  height: 17.6px;
  flex: none;
  display: flex;
  align-items: center;
  justify-content: center;
}

.snap.on {
  background: #cfe5f6;
}

.snap svg {
  width: 13px;
  height: 13px;
}

.snap-sep {
  width: 12px;
  height: 7px;
  flex: none;
  background: linear-gradient(#ccc, #ccc) center / 100% 1px no-repeat;
}

/* Palette */
.palette {
  height: 12px;
  flex: none;
  display: flex;
  align-items: stretch;
  background: #f0f0f0;
  border-top: 1px solid #333;
}

.no-paint {
  width: 11px;
  height: 11px;
  flex: none;
}

.colors {
  width: 1261px;
  flex: none;
  display: flex;
}

.colors i {
  flex: 1;
}

.palette-arrow {
  margin: 3px 0 0 2px;
  width: 0;
  height: 0;
  border-top: 3px solid transparent;
  border-bottom: 3px solid transparent;
  border-right: 3px solid #222;
}

/* Scrollbar */
.hscroll {
  height: 12px;
  flex: none;
  display: flex;
  align-items: center;
  background: #f0f0f0;
}

.scroll-arrow {
  width: 12px;
  flex: none;
  text-align: center;
  font-size: 8px;
  color: #aaa;
}

.scroll-arrow.dark {
  color: #333;
}

.scroll-track {
  flex: 1;
  height: 9px;
}

.scroll-thumb {
  width: 393px;
  height: 100%;
  background: #c9c9c9;
}

/* Status bar */
.status {
  height: 16px;
  flex: none;
  display: flex;
  align-items: center;
  background: #f0f0f0;
  font-size: 8px;
}

.fillstroke {
  width: 84px;
  flex: none;
  display: flex;
  flex-direction: column;
  padding-left: 2px;
  line-height: 8px;
  font-size: 7.5px;
  color: #555;
}

.fillstroke em {
  margin-left: 20px;
}

.op-label {
  width: 9px;
  flex: none;
  color: #555;
}

.op-spin { width: 33px; }

.st-ic {
  width: 9px;
  height: 9px;
  margin-left: 5px;
  flex: none;
}

.layer-combo {
  width: 56px;
  height: 16px;
  margin-left: 1px;
}

.layer-combo .combo-text {
  font-size: 6.5px;
  color: #333;
}

.message {
  margin-left: 2px;
  flex: 1;
  font-size: 7.7px;
  color: #666;
  white-space: nowrap;
}

.message b {
  color: #333;
}

.coords {
  width: 50px;
  flex: none;
  display: flex;
  flex-direction: column;
  height: 100%;
  padding-left: 3px;
  border-left: 1px solid #ccc;
  font-family: 'DejaVu Sans Mono', monospace;
  font-size: 7px;
  line-height: 8px;
  white-space: pre;
  color: #555;
}

.z-label {
  width: 7px;
  flex: none;
  color: #555;
}

.z-spin {
  width: 36px;
  height: 14px;
  margin-right: 1px;
}

.z-spin span {
  text-align: center;
}
```

FILE: app.js
```js
// Inkscape default palette, left to right
const paletteColors = [
  "#000000","#1a1a1a","#333333","#4d4d4d","#666666","#808080","#999999","#b3b3b3","#cccccc","#e6e6e6","#ececec","#f2f2f2","#f9f9f9","#ffffff",
  "#800000","#ff0000","#808000","#ffff00","#008000","#00ff00","#008080","#00ffff","#000080","#0000ff","#800080","#ff00ff",
  "#2b0000","#550000","#800000","#aa0000","#d40000","#ff0000","#ff2a2a","#ff5555","#ff8080","#ffaaaa","#ffd5d5",
  "#280b0b","#501616","#782121","#a02c2c","#c83737","#d35f5f","#de8787","#e9afaf","#f4d7d7",
  "#241c1c","#483737","#6c5353","#916f6f","#ac9393","#c8b7b7","#e3dbdb",
  "#2b1100","#552200","#803300","#aa4400","#d45500","#ff6600","#ff7f2a","#ff9955","#ffb380","#ffccaa","#ffe6d5",
  "#28170b","#502d16","#784421","#a05a2c","#c87137","#d38d5f","#deaa87","#e9c6af","#f4e3d7",
  "#241f1c","#483e37","#6c5d53","#917c6f","#ac9d93","#c8beb7","#e3dedb",
  "#2b2200","#554400","#806600","#aa8800","#d4aa00","#ffcc00","#ffd42a","#ffdd55","#ffe680","#ffeeaa","#fff6d5",
  "#28220b","#504416","#786721","#a0892c","#c8ab37","#d3bc5f","#decd87","#e9ddaf","#f4eed7",
  "#24221c","#484537","#6c6753","#918a6f","#aca793","#c8c4b7","#e3e2db",
  "#222b00","#445500","#668000","#88aa00","#aad400","#ccff00","#d4ff2a","#ddff55","#e5ff80","#eeffaa","#f6ffd5",
  "#22280b","#445016","#677821","#89a02c","#abc837","#bcd35f","#cdde87","#dde9af","#eef4d7",
  "#22241c","#454837","#676c53","#8a916f","#a7ac93","#c4c8b7","#e2e3db",
  "#112b00"
];

const colors = document.getElementById("colors");
paletteColors.forEach(c => {
  const swatch = document.createElement("i");
  swatch.style.background = c;
  colors.appendChild(swatch);
});

const rulerTop = document.getElementById("rulerTop");
for (let v = -530; v <= -260; v += 10) {
  const label = document.createElement("span");
  label.textContent = v;
  rulerTop.appendChild(label);
}

const rulerLeft = document.getElementById("rulerLeft");
[450, 425, 400, 375, 350, 325, 300].forEach(v => {
  const label = document.createElement("span");
  label.textContent = v;
  rulerLeft.appendChild(label);
});
```
